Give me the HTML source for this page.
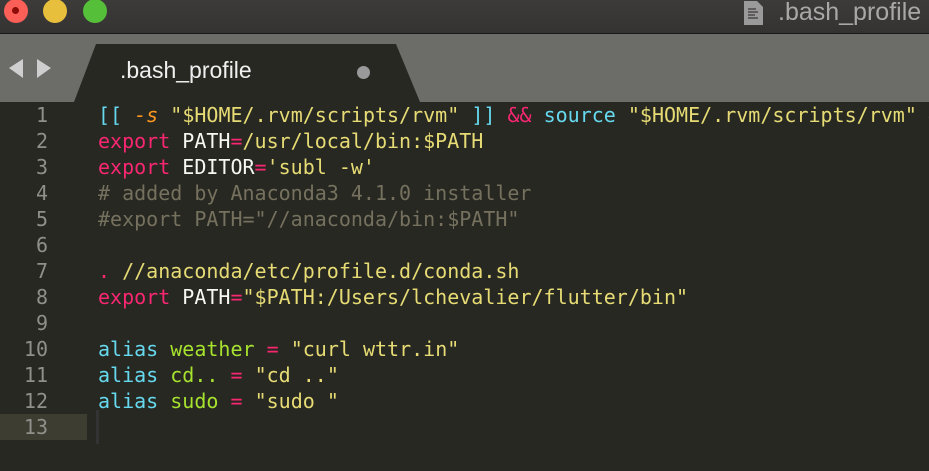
<!DOCTYPE html><html><head><style>
body{margin:0;width:929px;height:471px;overflow:hidden;background:#272822;font-family:"DejaVu Sans Mono","Liberation Mono",monospace;position:relative}
.title{position:absolute;left:0;top:0;width:929px;height:33px;background:linear-gradient(#3d3b3a,#353332);border-bottom:1px solid #1a1a1a}
.dot{position:absolute;top:-1px;width:24px;height:24px;border-radius:50%}
.tabbar{position:absolute;top:34px;left:0;width:929px;height:68px;background:#6c6d68}
.tab{position:absolute;left:74px;top:44px;width:346px;height:58px;background:#272822;clip-path:polygon(22px 0,322px 0,346px 58px,0 58px);border-radius:6px 6px 0 0}
.code{position:absolute;top:102px;left:0;width:929px}
.ln{position:absolute;left:0;width:48px;text-align:right;color:#8f908a;font-size:20px;line-height:26px}
.tx{position:absolute;left:98px;white-space:pre;color:#f8f8f2;font-size:20px;line-height:26px}
.p{color:#f92672}.c{color:#66d9ef}.y{color:#e6db74}.g{color:#a6e22e}.o{color:#fd971f;font-style:italic}.m{color:#75715e}
</style></head><body>
<div class="title">
<div class="dot" style="left:4px;background:#fc5f57"><div style="position:absolute;left:8px;top:8px;width:7px;height:7px;border-radius:50%;background:#8d0c09"></div></div>
<div class="dot" style="left:43px;background:#e7bf3c"></div>
<div class="dot" style="left:83px;background:#56bf3a"></div>
<svg style="position:absolute;left:743px;top:1px" width="22" height="24"><path d="M1 0h13l6 6v18H1z" fill="#9a9a9a"/><path d="M5 8h8M5 11h10M5 14h7M5 17h10" stroke="#3a3838" stroke-width="1.3"/></svg>
<div style="position:absolute;left:778px;top:-2px;font-family:'Liberation Sans',sans-serif;font-size:25px;color:#a8a8a8">.bash_profile</div>
</div>
<div class="tabbar"></div>
<svg style="position:absolute;left:8px;top:58px" width="46" height="22"><path d="M1 10L15 1v19z" fill="#cfcfcf"/><path d="M29 1l14 9-14 10z" fill="#cfcfcf"/></svg>
<div class="tab"></div>
<div style="position:absolute;left:120px;top:57px;font-family:'Liberation Sans',sans-serif;font-size:23px;color:#f0f0f0">.bash_profile</div>
<div style="position:absolute;left:357px;top:66px;width:13px;height:13px;border-radius:50%;background:#9a9a9a"></div>
<div style="position:absolute;left:0;top:414px;width:87px;height:26px;background:#3e3d32"></div>
<div style="position:absolute;left:96px;top:410px;width:3px;height:34px;background:#333"></div>
<div class="code">
<div class="ln" style="top:0">1</div><div class="ln" style="top:26px">2</div><div class="ln" style="top:52px">3</div><div class="ln" style="top:78px">4</div><div class="ln" style="top:104px">5</div><div class="ln" style="top:130px">6</div><div class="ln" style="top:156px">7</div><div class="ln" style="top:182px">8</div><div class="ln" style="top:208px">9</div><div class="ln" style="top:234px">10</div><div class="ln" style="top:260px">11</div><div class="ln" style="top:286px">12</div><div class="ln" style="top:312px">13</div>
<div class="tx" style="top:0"><span class="c">[[</span> <span class="o">-s</span> <span class="y">"$HOME/.rvm/scripts/rvm"</span> <span class="c">]]</span> <span class="p">&amp;&amp;</span> <span class="c">source</span> <span class="y">"$HOME/.rvm/scripts/rvm"</span> <span class="m">#</span></div>
<div class="tx" style="top:26px"><span class="p">export</span> PATH<span class="p">=</span><span class="y">/usr/local/bin:$PATH</span></div>
<div class="tx" style="top:52px"><span class="p">export</span> EDITOR<span class="p">=</span><span class="y">'subl -w'</span></div>
<div class="tx m" style="top:78px"># added by Anaconda3 4.1.0 installer</div>
<div class="tx m" style="top:104px">#export PATH="//anaconda/bin:$PATH"</div>
<div class="tx" style="top:156px"><span class="p">.</span> <span class="y">//anaconda/etc/profile.d/conda.sh</span></div>
<div class="tx" style="top:182px"><span class="p">export</span> PATH<span class="p">=</span><span class="y">"$PATH:/Users/lchevalier/flutter/bin"</span></div>
<div class="tx" style="top:234px"><span class="c">alias</span> <span class="g">weather</span> <span class="p">=</span> <span class="y">"curl wttr.in"</span></div>
<div class="tx" style="top:260px"><span class="c">alias</span> <span class="g">cd..</span> <span class="p">=</span> <span class="y">"cd .."</span></div>
<div class="tx" style="top:286px"><span class="c">alias</span> <span class="g">sudo</span> <span class="p">=</span> <span class="y">"sudo "</span></div>
</div>
</body></html>
